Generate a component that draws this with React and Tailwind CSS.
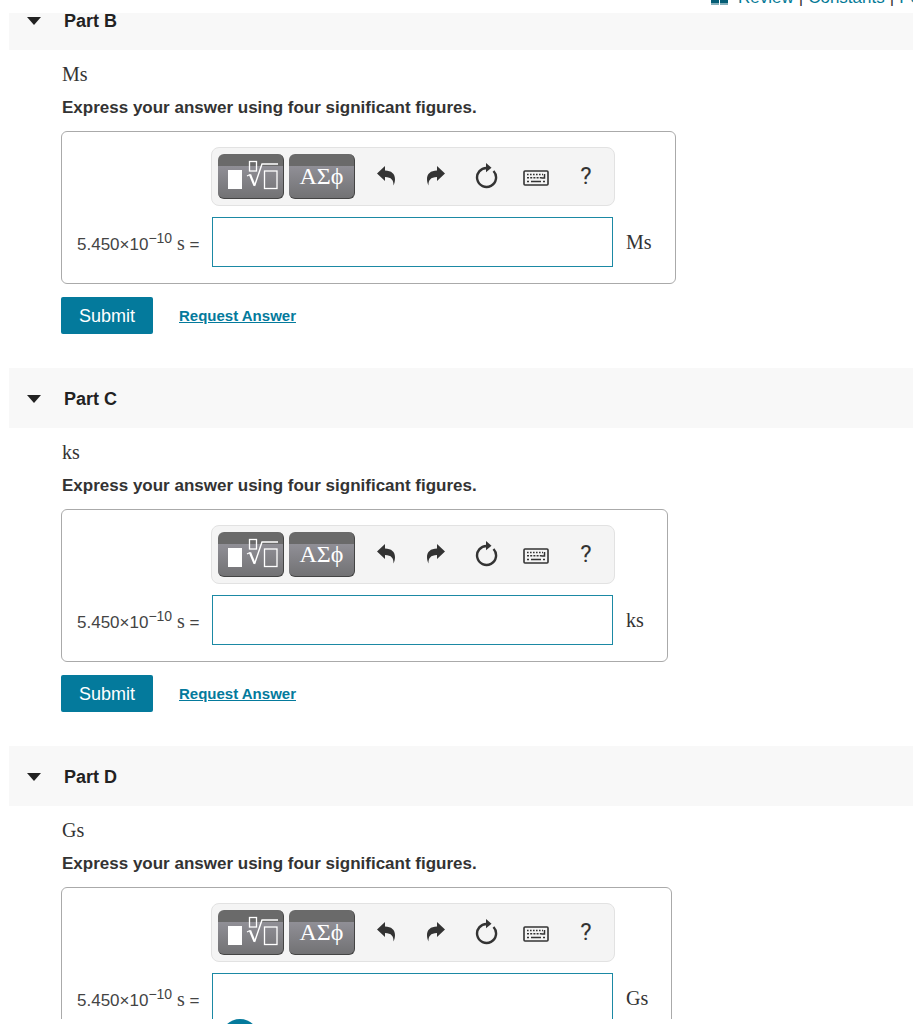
import React from 'react';

const parts = [
  { id: 'B', unit: 'Ms' },
  { id: 'C', unit: 'ks' },
  { id: 'D', unit: 'Gs' },
];

const BookIcon = () => (
  <svg width="18" height="14" viewBox="0 0 18 14" className="shrink-0" aria-hidden="true">
    <path d="M0 1h8v11H0zM9 1h8v11H9z" fill="#055d75" />
    <path d="M0 13h8M9 13h8" stroke="#055d75" strokeWidth="1" />
  </svg>
);

const TemplateIcon = () => (
  <svg width="66" height="45" viewBox="0 0 66 45" fill="none" className="shrink-0" aria-hidden="true">
    <rect x="10" y="17" width="14" height="19" fill="#fff" />
    <rect x="31.5" y="8.5" width="7" height="9.5" stroke="#fff" strokeWidth="1.3" />
    <path d="M29 23l3-1.5" stroke="#fff" strokeWidth="1.2" />
    <path d="M32 21.5l4.5 11" stroke="#fff" strokeWidth="2.2" />
    <path d="M36.500 33L44 11h16" stroke="#fff" strokeWidth="1.4" />
    <rect x="46.500" y="18" width="12.500" height="17.500" stroke="#fff" strokeWidth="1.3" />
  </svg>
);

const UndoIcon = () => (
  <svg width="20" height="20" viewBox="0 0 20 20" aria-hidden="true">
    <path d="M1 7.5L9 0v4.5c6.5 0 10 3.5 10 8.5 0 2.5-.6 4.5-1.5 6.5.2-5-2-8.500-8.500-8.500V15z" fill="#333" />
  </svg>
);

const RedoIcon = () => (
  <svg width="20" height="20" viewBox="0 0 20 20" aria-hidden="true">
    <path d="M19 7.5L11 0v4.500C4.500 4.500 1 8 1 13c0 2.500.6 4.500 1.500 6.500-.2-5 2-8.500 8.500-8.500V15z" fill="#333" />
  </svg>
);

const ResetIcon = () => (
  <svg width="24" height="26" viewBox="0 0 24 26" fill="none" aria-hidden="true">
    <path d="M13 5a9.500 9.500 0 1 0 6.500 3" stroke="#333" strokeWidth="2.400" />
    <path d="M12 0l5.500 4.700-5.500 4.600z" fill="#333" />
  </svg>
);

const KeyboardIcon = () => (
  <svg width="26" height="20" viewBox="0 -4 26 20" fill="none" aria-hidden="true">
    <rect x="1" y="1" width="24" height="14" rx="1" stroke="#333" strokeWidth="1.600" />
    <path d="M4 4.500h16" stroke="#333" strokeWidth="1.600" strokeDasharray="1.600 1.400" />
    <path d="M4 7.800h15" stroke="#333" strokeWidth="1.600" strokeDasharray="2 1.200" />
    <path d="M21.500 4v4h-3" stroke="#333" strokeWidth="1.500" />
    <path d="M4 11.500h2M8 11.500h10M20 11.500h2" stroke="#333" strokeWidth="1.700" />
  </svg>
);

const tools = [
  { name: 'Undo', icon: <UndoIcon /> },
  { name: 'Redo', icon: <RedoIcon /> },
  { name: 'Reset', icon: <ResetIcon /> },
  { name: 'Keyboard shortcuts', icon: <KeyboardIcon /> },
  { name: 'Help', icon: '?' },
];

const paletteButton =
  'flex h-[45px] w-[66px] items-center justify-center rounded-md border-r border-b border-[#444] bg-linear-to-b from-[#6a6a6a] from-28% via-[#908f96] via-28% to-[#727274] text-white';

const Toolbar = () => (
  <div className="col-start-2 flex h-[59px] items-center rounded-lg border border-[#e2e2e2] bg-[#f4f4f4] pb-px pl-1.5" role="toolbar">
    <button type="button" aria-label="Templates" className={paletteButton}>
      <TemplateIcon />
    </button>
    <button type="button" aria-label="Symbols" className={`${paletteButton} ml-[5px] font-['Liberation_Serif',serif] text-2xl`}>
      ΑΣϕ
    </button>
    <div className="ml-1.5 flex">
      {tools.map((tool) => (
        <button
          key={tool.name}
          type="button"
          aria-label={tool.name}
          className="flex h-11 w-[50px] items-center justify-center font-['Roboto',sans-serif] text-2xl text-[#333]"
        >
          {tool.icon}
        </button>
      ))}
    </div>
  </div>
);

const Part = ({ id, unit }) => (
  <section>
    <h2 className="ml-[9px] h-[60px] bg-[#f8f8f8] text-lg font-bold text-[#222]">
      <button type="button" aria-expanded="true" className="flex h-full items-center pl-[18px] pt-0.5">
        <svg width="14" height="8" viewBox="0 0 14 8" className="mr-[23px]" aria-hidden="true">
          <path d="M0 0h14L7 8z" fill="#222" />
        </svg>
        Part {id}
      </button>
    </h2>
    <div className="flex flex-col items-start pt-2.5 pb-[34px] pl-[61px] text-[#333]">
      <p className="pl-px font-['Liberation_Serif',serif] text-xl leading-7">{unit}</p>
      <p className="mt-2 pl-px text-[17px] leading-6 font-bold">Express your answer using four significant figures.</p>
      <div className="mt-[11px] grid grid-cols-[134px_404px_auto] gap-y-[11px] rounded-md border border-[#aaa] pt-[15px] pr-[23px] pb-4 pl-[15px]">
        <Toolbar />
        <label htmlFor={`answer-${id}`} className="col-start-1 self-center pt-[3px] text-[17px] leading-6 whitespace-nowrap text-[#444]">
          5.450×10<sup className="text-sm leading-none">−10</sup>{' '}
          <span className="font-['Liberation_Serif',serif] text-xl leading-6">s</span> =
        </label>
        <input id={`answer-${id}`} type="text" className="ml-px h-[50px] w-[401px] border border-[#1b89a4] px-2 text-lg outline-none" />
        <span className="self-center pl-[11px] font-['Liberation_Serif',serif] text-xl leading-7">{unit}</span>
      </div>
      <div className="mt-[13px] flex items-center">
        <button type="button" className="h-[37px] w-[92px] rounded-xs bg-[#047a9c] text-lg text-white">
          Submit
        </button>
        <a href="#request" className="ml-[26px] text-[15px] leading-6 font-bold text-[#047a9c] underline">
          Request Answer
        </a>
      </div>
    </div>
  </section>
);

const App = () => (
  <div className="flex h-screen flex-col overflow-hidden bg-white font-['Liberation_Sans',Arial,sans-serif]">
    <header className="h-[13px] shrink-0 overflow-hidden">
      <nav className="-mt-3 ml-auto flex w-[202px] items-center gap-[5px] text-[17px] leading-5 whitespace-nowrap text-[#333]">
        <BookIcon />
        <span className="ml-1 flex gap-[5px]">
          <a href="#review" className="text-[#057a96]">Review</a>|
          <a href="#constants" className="text-[#057a96]">Constants</a>|
          <a href="#periodic" className="text-[#057a96]">Periodic Table</a>
        </span>
      </nav>
    </header>
    <main className="min-h-0 flex-1 overflow-hidden">
      <div className="-mt-[23px]">
        {parts.map((part) => (
          <Part key={part.id} {...part} />
        ))}
      </div>
    </main>
    <footer className="h-[5px] shrink-0 overflow-hidden">
      <div className="ml-[221px] size-[38px] rounded-full bg-[#047a9c]" />
    </footer>
  </div>
);

export default App;
